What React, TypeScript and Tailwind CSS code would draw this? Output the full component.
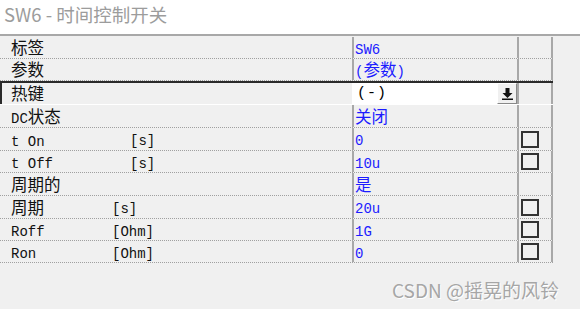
import React from "react";

type Row = {
  label: string;
  unit?: string;
  unitAt?: number;
  value: string;
  check?: boolean;
  h: number;
};

const rows: Row[] = [
  { label: "标签", value: "SW6", h: 22 },
  { label: "参数", value: "(参数)", h: 22 },
  { label: "DC状态", value: "关闭", h: 23 },
  { label: "t On", unit: "[s]", unitAt: 119, value: "0", check: true, h: 23 },
  { label: "t Off", unit: "[s]", unitAt: 119, value: "10u", check: true, h: 22 },
  { label: "周期的", value: "是", h: 23 },
  { label: "周期", unit: "[s]", unitAt: 101, value: "20u", check: true, h: 23 },
  { label: "Roff", unit: "[Ohm]", unitAt: 101, value: "1G", check: true, h: 22 },
  { label: "Ron", unit: "[Ohm]", unitAt: 101, value: "0", check: true, h: 22 },
];

// ascii in a mono face, chinese a bit larger like the old bitmap font
const CellText = ({ text, color }: { text: string; color: string }) => {
  const parts = text.split(/([\u4e00-\u9fff]+)/).filter(Boolean);
  return (
    <span className={`leading-none whitespace-pre ${color}`}>
      {parts.map((p, i) =>
        /[\u4e00-\u9fff]/.test(p) ? (
          <span key={i} className="font-['Noto_Sans_CJK_SC',sans-serif] text-[16.5px]">
            {p}
          </span>
        ) : (
          <span key={i} className="font-['Liberation_Mono',monospace] text-[14px]">
            {p}
          </span>
        )
      )}
    </span>
  );
};

const Checkbox = () => (
  <div className="w-[18px] h-[17px] border-2 border-[#333] bg-[#f0f0f0]" />
);

const PropRow = ({ row }: { row: Row }) => (
  <div
    className="flex border-b border-dotted border-[#a0a0a0]"
    style={{ height: row.h }}
  >
    <div className="w-[352px] pl-[11px] flex items-center pt-[1px]">
      <div className="shrink-0" style={{ width: row.unitAt ?? "auto" }}>
        <CellText text={row.label} color="text-[#111]" />
      </div>
      {row.unit && <CellText text={row.unit} color="text-[#111]" />}
    </div>
    <div className="w-[165px] border-l-2 border-[#a8a8a8] pl-[1px] flex items-center pt-[1px]">
      <CellText text={row.value} color="text-[#1c1cff]" />
    </div>
    <div className="w-[36px] border-x-2 border-[#a8a8a8] pl-[2px] flex items-center">
      {row.check && <Checkbox />}
    </div>
  </div>
);

const HotkeyRow = () => (
  <div className="flex h-[24px] border-t-2 border-[#2a2a2a] border-b border-b-white">
    <div className="w-[352px] pl-[9px] flex items-center border-l-2 border-[#2a2a2a]">
      <CellText text="热键" color="text-[#111]" />
    </div>
    <div className="w-[165px] flex">
      <div className="flex-1 bg-white pl-[5px] flex items-center">
        <span className="font-['Liberation_Mono',monospace] text-[15px] leading-none text-black tracking-[1px]">
          (-)
        </span>
      </div>
      <div className="w-[20px] flex flex-col items-center justify-center bg-[#f0f0f0] border border-t-white border-l-white border-b-[#888] border-r-[#888]">
        <svg width="11" height="12" viewBox="0 0 11 12">
          <path d="M3.5 0h4v5h3l-5 5-5-5h3z" fill="#111" />
          <rect x="0" y="10.5" width="11" height="1.5" fill="#111" />
        </svg>
      </div>
    </div>
    <div className="w-[36px] border-x-2 border-[#a8a8a8]" />
  </div>
);

export default function App() {
  return (
    <div className="relative w-[580px] h-[309px] overflow-hidden bg-[#f0f0f0] flex flex-col">
      <div className="h-[34px] shrink-0 bg-white pl-[4px] pt-[1px] font-['Noto_Sans_CJK_SC','Noto_Sans',sans-serif] text-[18.5px] leading-[26px] text-[#9c9c9c]">
        SW6 - 时间控制开关
      </div>
      <div className="h-[2px] shrink-0 bg-[#a8a8a8]" />
      <div className="mt-[1px] w-[553px]">
        <PropRow row={rows[0]} />
        <PropRow row={rows[1]} />
        <HotkeyRow />
        {rows.slice(2).map((r) => (
          <PropRow key={r.label} row={r} />
        ))}
      </div>
      <div className="absolute left-[392px] top-[280px] font-['Noto_Sans_CJK_SC','Noto_Sans',sans-serif] text-[19px] leading-none text-[#a6a6a6] [text-shadow:1px_1px_0_#ffffff]">
        CSDN @摇晃的风铃
      </div>
    </div>
  );
}
